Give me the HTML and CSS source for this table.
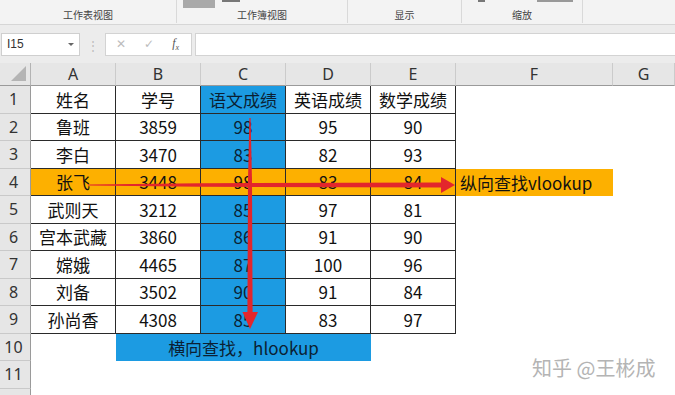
FILE: index.html
```html
<!DOCTYPE html>
<html lang="zh-CN">
<head>
<meta charset="utf-8">
<title>Excel 查找</title>
<link rel="stylesheet" href="styles.css">
</head>
<body>
<div class="app">
  <div class="ribbon">
    <div class="grp g1">
      <div class="icons"></div>
      <span class="glabel">工作表视图</span>
    </div>
    <div class="grp g2">
      <div class="icons"><span class="rect"></span><span class="frag f1"></span></div>
      <span class="glabel">工作簿视图</span>
    </div>
    <div class="grp g3">
      <div class="icons"></div>
      <span class="glabel">显示</span>
    </div>
    <div class="grp g4">
      <div class="icons"><span class="frag f2"></span><span class="frag f3"></span></div>
      <span class="glabel">缩放</span>
    </div>
    <div class="grp g5"></div>
  </div>

  <div class="fbar">
    <div class="namebox"><span class="ref">I15</span><span class="caret"></span></div>
    <div class="dots">⋮</div>
    <div class="fbtns">
      <span class="fb">✕</span><span class="fb">✓</span><span class="fx">f<sub>x</sub></span>
    </div>
    <div class="finput"></div>
  </div>

  <div class="sheet">
    <div class="corner"><span class="tri"></span></div>
    <div class="ch">A</div><div class="ch">B</div><div class="ch">C</div><div class="ch">D</div><div class="ch">E</div><div class="ch">F</div><div class="ch">G</div>

    <div class="rh">1</div>
    <div class="c">姓名</div><div class="c">学号</div><div class="c blue">语文成绩</div><div class="c">英语成绩</div><div class="c">数学成绩</div><div class="e"></div><div class="e"></div>

    <div class="rh">2</div>
    <div class="c">鲁班</div><div class="c">3859</div><div class="c blue">98</div><div class="c">95</div><div class="c">90</div><div class="e"></div><div class="e"></div>

    <div class="rh">3</div>
    <div class="c">李白</div><div class="c">3470</div><div class="c blue">83</div><div class="c">82</div><div class="c">93</div><div class="e"></div><div class="e"></div>

    <div class="rh">4</div>
    <div class="c orange">张飞</div><div class="c orange">3448</div><div class="c orange">98</div><div class="c orange">83</div><div class="c orange">84</div><div class="e orange left">纵向查找vlookup</div><div class="e"></div>

    <div class="rh">5</div>
    <div class="c">武则天</div><div class="c">3212</div><div class="c blue">85</div><div class="c">97</div><div class="c">81</div><div class="e"></div><div class="e"></div>

    <div class="rh">6</div>
    <div class="c">宫本武藏</div><div class="c">3860</div><div class="c blue">86</div><div class="c">91</div><div class="c">90</div><div class="e"></div><div class="e"></div>

    <div class="rh">7</div>
    <div class="c">嫦娥</div><div class="c">4465</div><div class="c blue">87</div><div class="c">100</div><div class="c">96</div><div class="e"></div><div class="e"></div>

    <div class="rh">8</div>
    <div class="c">刘备</div><div class="c">3502</div><div class="c blue">90</div><div class="c">91</div><div class="c">84</div><div class="e"></div><div class="e"></div>

    <div class="rh">9</div>
    <div class="c">孙尚香</div><div class="c">4308</div><div class="c blue">85</div><div class="c">83</div><div class="c">97</div><div class="e"></div><div class="e"></div>

    <div class="rh">10</div>
    <div class="e"></div><div class="e blue span3">横向查找，hlookup</div><div class="e"></div><div class="e"></div><div class="e"></div>

    <div class="rh">11</div>
    <div class="e"></div><div class="e"></div><div class="e"></div><div class="e"></div><div class="e"></div><div class="e"></div><div class="e"></div>

    <div class="rh"></div>
    <div class="e"></div><div class="e"></div><div class="e"></div><div class="e"></div><div class="e"></div><div class="e"></div><div class="e"></div>
  </div>

  <svg class="arrows" width="675" height="395" viewBox="0 0 675 395">
    <polygon fill="#e3262c" points="88,184.5 200,183.2 442,182.5 442,187.5 200,186.8 88,185.5"/>
    <polygon fill="#e3262c" points="441,177 455,185 441,193"/>
    <polygon fill="#e3262c" points="249.4,118 250.6,118 252,180 252.6,313 247.4,313 248,180"/>
    <polygon fill="#e3262c" points="242.5,312 258,312 250,329"/>
  </svg>

  <div class="watermark">知乎 @王彬成</div>
</div>
</body>
</html>
```

FILE: styles.css
```css
* { box-sizing: border-box; }

html, body {
  margin: 0;
  padding: 0;
  background: #ffffff;
}

body {
  font-family: "Noto Sans CJK SC", "Noto Sans", sans-serif;
  color: #111;
}

.app {
  position: relative;
  width: 675px;
  height: 395px;
  overflow: hidden;
  background: #ffffff;
}

/* ---------- ribbon ---------- */
.ribbon {
  display: flex;
  height: 25px;
  background: #f3f3f3;
  border-bottom: 1px solid #d6d6d6;
}

.grp {
  display: flex;
  flex-direction: column;
  align-items: center;
  justify-content: space-between;
  border-right: 1px solid #d9d9d9;
  padding-bottom: 2px;
  height: 23px;
}

.g1 { width: 177px; }
.g2 { width: 171px; }
.g3 { width: 114px; }
.g4 { width: 121px; }
.g5 { flex: 1; border-right: none; }

.icons {
  display: flex;
  align-self: stretch;
  height: 8px;
}

.rect {
  width: 32px;
  height: 8px;
  margin-left: 6px;
  background: #a9a9a9;
}

.frag {
  height: 2px;
  background: #777;
}

.f1 { width: 18px; margin-left: 7px; }
.f2 { width: 7px; margin-left: 16px; }
.f3 { width: 36px; margin-left: 52px; background: #999; }

.glabel {
  font-size: 10px;
  line-height: 13px;
  color: #444;
}

/* ---------- formula bar ---------- */
.fbar {
  display: flex;
  align-items: center;
  height: 38px;
  padding: 7px 0 7px 1px;
  background: #ececec;
}

.namebox {
  display: flex;
  align-items: center;
  justify-content: space-between;
  width: 79px;
  height: 23px;
  background: #fff;
  border: 1px solid #cfcfcf;
  padding: 0 5px 0 5px;
}

.ref {
  font-family: "Liberation Sans", sans-serif;
  font-size: 12px;
  color: #333;
}

.caret {
  width: 0;
  height: 0;
  border-left: 3px solid transparent;
  border-right: 3px solid transparent;
  border-top: 3px solid #666;
}

.dots {
  width: 25px;
  text-align: center;
  font-size: 12px;
  color: #bdbdbd;
}

.fbtns {
  display: flex;
  align-items: center;
  gap: 18px;
  width: 87px;
  height: 23px;
  background: #fff;
  border: 1px solid #d3d3d3;
  padding: 0 0 0 10px;
}

.fb {
  font-family: "DejaVu Sans", sans-serif;
  font-size: 12px;
  color: #bcbcbc;
}

.fx {
  font-family: "Liberation Serif", serif;
  font-style: italic;
  font-size: 12px;
  color: #555;
}

.fx sub {
  font-size: 8px;
}

.finput {
  flex: 1;
  height: 23px;
  margin-left: 3px;
  background: #fff;
  border: 1px solid #d3d3d3;
  border-right: none;
}

/* ---------- sheet ---------- */
.sheet {
  display: grid;
  grid-template-columns: 31px repeat(5, 85px) 157px 1fr;
  grid-template-rows: 23px repeat(12, 27.5px);
  font-size: 17px;
}

.corner {
  display: flex;
  align-items: flex-end;
  justify-content: flex-end;
  padding: 0 4px 4px 0;
  background: #e6e6e6;
  border-right: 1px solid #b3b3b3;
  border-bottom: 1px solid #9a9a9a;
}

.tri {
  width: 0;
  height: 0;
  border-left: 15px solid transparent;
  border-bottom: 15px solid #b4b4b4;
}

.ch {
  display: flex;
  align-items: center;
  justify-content: center;
  background: #e6e6e6;
  border-right: 1px solid #cbcbcb;
  border-bottom: 1px solid #9a9a9a;
  font-family: "Noto Sans", sans-serif;
  font-size: 16px;
  color: #333;
}

.rh {
  display: flex;
  align-items: center;
  justify-content: center;
  background: #e6e6e6;
  border-right: 1px solid #9a9a9a;
  border-bottom: 1px solid #c9c9c9;
  font-family: "Noto Sans", sans-serif;
  font-size: 16px;
  color: #333;
  padding-right: 3px;
}

.c {
  display: flex;
  align-items: center;
  justify-content: center;
  background: #fff;
  border-right: 1px solid #2a2a2a;
  border-bottom: 1px solid #2a2a2a;
  white-space: nowrap;
}

.e {
  display: flex;
  align-items: center;
  justify-content: center;
  background: #fff;
  white-space: nowrap;
}

.blue {
  background: #1c9be2;
  color: #0b1f33;
}

.orange {
  background: #fdb000;
}

.left {
  justify-content: flex-start;
  padding-left: 4px;
  color: #111;
}

.span3 {
  grid-column: span 3;
}

/* ---------- overlays ---------- */
.arrows {
  position: absolute;
  left: 0;
  top: 0;
  pointer-events: none;
}

.watermark {
  position: absolute;
  left: 532px;
  top: 354px;
  font-size: 20px;
  line-height: 28px;
  color: #b4b4b4;
  text-shadow: 0 0 1px rgba(255, 255, 255, 0.9);
  white-space: nowrap;
}
```
